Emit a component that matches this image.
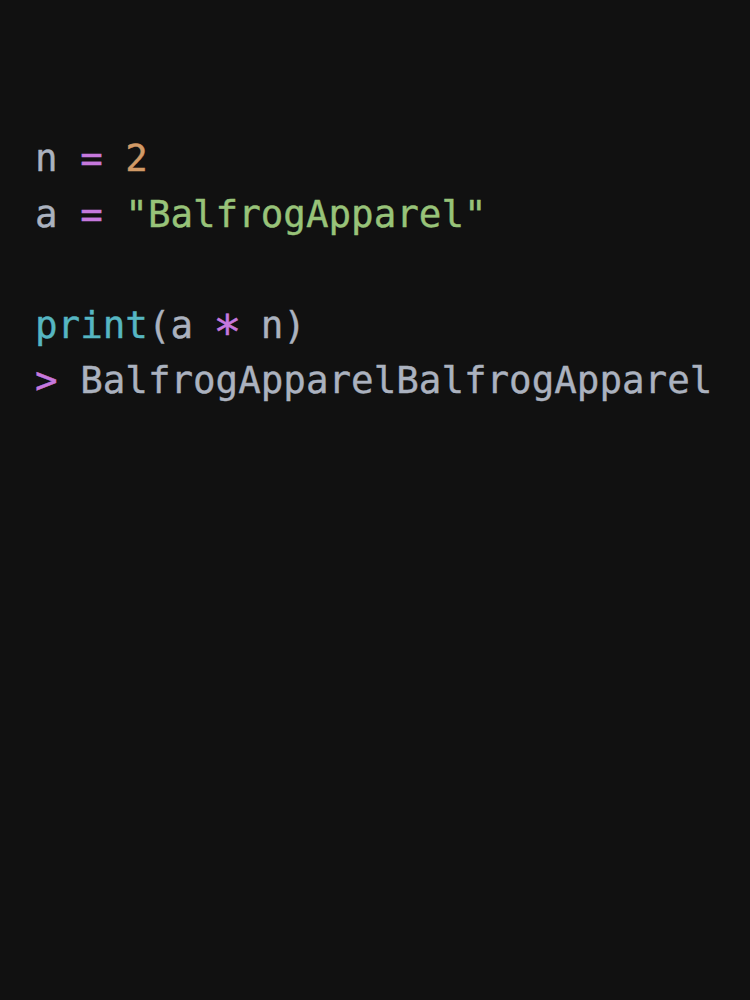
export default function App() {
  return (
    <div className="min-h-[1000px] w-full bg-[#111111] pt-[131px] pl-[35px] font-['DejaVu_Sans_Mono',monospace] text-[37.5px] leading-[55.5px] text-[#abb2bf] whitespace-pre [-webkit-text-stroke:0.4px]">
      <div>
        n <span className="text-[#c678dd]">=</span> <span className="text-[#d19a66]">2</span>
      </div>
      <div>
        a <span className="text-[#c678dd]">=</span> <span className="text-[#98c379]">"BalfrogApparel"</span>
      </div>
      <div>&nbsp;</div>
      <div>
        <span className="text-[#56b6c2]">print</span>(a{" "}
        <span className="inline-block translate-y-[7px] scale-125 text-[#c678dd]">*</span> n)
      </div>
      <div>
        <span className="text-[#c678dd]">&gt;</span> BalfrogApparelBalfrogApparel
      </div>
    </div>
  );
}
